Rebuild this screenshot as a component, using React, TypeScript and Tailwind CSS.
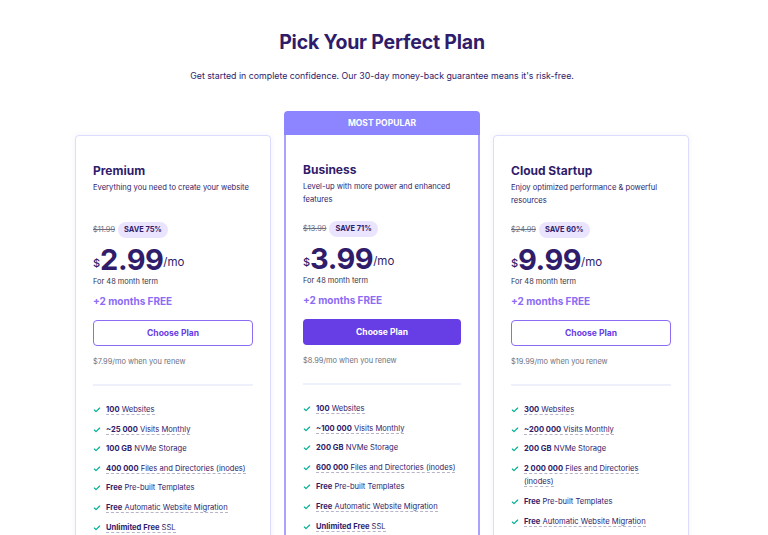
import React from 'react';
import { Check } from 'lucide-react';

type Feature = { bold: string; rest: string; dashed?: boolean };

type Plan = {
  name: string;
  desc: string;
  old: string;
  save: string;
  price: string;
  renew: string;
  popular?: boolean;
  features: Feature[];
};

const plans: Plan[] = [
  {
    name: 'Premium',
    desc: 'Everything you need to create your website',
    old: '$11.99',
    save: 'SAVE 75%',
    price: '2.99',
    renew: '$7.99/mo when you renew',
    features: [
      { bold: '100', rest: ' Websites', dashed: true },
      { bold: '~25 000', rest: ' Visits Monthly', dashed: true },
      { bold: '100 GB', rest: ' NVMe Storage' },
      { bold: '400 000', rest: ' Files and Directories (inodes)', dashed: true },
      { bold: 'Free', rest: ' Pre-built Templates' },
      { bold: 'Free', rest: ' Automatic Website Migration', dashed: true },
      { bold: 'Unlimited Free', rest: ' SSL', dashed: true },
    ],
  },
  {
    name: 'Business',
    desc: 'Level-up with more power and enhanced features',
    old: '$13.99',
    save: 'SAVE 71%',
    price: '3.99',
    renew: '$8.99/mo when you renew',
    popular: true,
    features: [
      { bold: '100', rest: ' Websites', dashed: true },
      { bold: '~100 000', rest: ' Visits Monthly', dashed: true },
      { bold: '200 GB', rest: ' NVMe Storage' },
      { bold: '600 000', rest: ' Files and Directories (inodes)', dashed: true },
      { bold: 'Free', rest: ' Pre-built Templates' },
      { bold: 'Free', rest: ' Automatic Website Migration', dashed: true },
      { bold: 'Unlimited Free', rest: ' SSL', dashed: true },
    ],
  },
  {
    name: 'Cloud Startup',
    desc: 'Enjoy optimized performance & powerful resources',
    old: '$24.99',
    save: 'SAVE 60%',
    price: '9.99',
    renew: '$19.99/mo when you renew',
    features: [
      { bold: '300', rest: ' Websites', dashed: true },
      { bold: '~200 000', rest: ' Visits Monthly', dashed: true },
      { bold: '200 GB', rest: ' NVMe Storage' },
      { bold: '2 000 000', rest: ' Files and Directories (inodes)', dashed: true },
      { bold: 'Free', rest: ' Pre-built Templates' },
      { bold: 'Free', rest: ' Automatic Website Migration', dashed: true },
      { bold: 'Unlimited Free', rest: ' SSL', dashed: true },
    ],
  },
];

const PlanCard: React.FC<{ plan: Plan }> = ({ plan }) => (
  <div className="flex w-[196px] flex-col">
    {plan.popular ? (
      <div className="flex h-[24px] items-center justify-center rounded-t-[4px] bg-[#8c85ff] text-[8.5px] font-bold text-white">
        MOST POPULAR
      </div>
    ) : (
      <div className="h-[24px]" />
    )}
    <div
      className={`flex h-[420px] flex-col bg-white px-[17px] pt-[27px] ${
        plan.popular
          ? 'border-x-2 border-[#a9a3ff]'
          : 'rounded-t-[4px] border border-[#dcdcfd] shadow-[0_0_6px_rgba(103,61,230,0.08)]'
      }`}
    >
      <h3 className="text-[12px] font-bold leading-[16px] text-[#2f1c6a]">{plan.name}</h3>
      <p className="mt-[2px] h-[26px] text-[7.6px] leading-[13px] text-[#2f1c6a]">{plan.desc}</p>

      <div className="mt-[15px] flex items-center gap-[3px]">
        <span className="text-[7.4px] text-[#6d7081] line-through">{plan.old}</span>
        <span className="flex h-[16px] items-center rounded-full bg-[#ebe4ff] px-[6px] text-[7.4px] font-bold text-[#2f1c6a]">
          {plan.save}
        </span>
      </div>

      <div className="mt-[8px] flex h-[28px] items-end text-[#2f1c6a]">
        <span className="mb-[3px] text-[11px] font-medium">$</span>
        <span className="text-[29px] font-bold leading-[28px] tracking-[-0.5px]">{plan.price}</span>
        <span className="mb-[3px] text-[11.5px]">/mo</span>
      </div>
      <p className="mt-[2px] text-[7.4px] leading-[12px] text-[#36344d]">For 48 month term</p>

      <p className="mt-[6px] text-[10px] font-bold leading-[14px] text-[#8c6bf5]">+2 months FREE</p>

      <button
        className={`mt-[12px] flex h-[26px] w-full items-center justify-center rounded-[4px] text-[8.5px] font-bold ${
          plan.popular
            ? 'bg-[#673de6] text-white'
            : 'border border-[#8c6bf5] bg-white text-[#673de6]'
        }`}
      >
        Choose Plan
      </button>

      <p className="mt-[10px] text-[7.4px] leading-[12px] text-[#6d7081]">{plan.renew}</p>

      <div className="mt-[16px] h-[2px] w-full bg-[#eef0fc]" />

      <ul className="mt-[17px] flex flex-col gap-[6px] pr-[4px]">
        {plan.features.map((f, i) => (
          <li key={i} className="flex items-start gap-[5px] text-[7.6px] leading-[13.6px] text-[#2f1c6a]">
            <Check className="mt-[3px] h-[8px] w-[8px] shrink-0 text-[#00b090]" strokeWidth={3.5} />
            <span>
              <span
                className={
                  f.dashed
                    ? 'border-b border-dashed border-[#b6b4c8] [box-decoration-break:clone]'
                    : ''
                }
              >
                <b className="font-bold">{f.bold}</b>
                {f.rest}
              </span>
            </span>
          </li>
        ))}
      </ul>
    </div>
  </div>
);

export default function App() {
  return (
    <div
      className="h-[535px] w-[768px] overflow-hidden bg-white pr-[4px]"
      style={{ fontFamily: 'Inter, "Noto Sans", sans-serif' }}
    >
      <div className="flex flex-col items-center">
        <h1 className="mt-[29px] text-[19.5px] font-bold leading-[26px] tracking-[-0.2px] text-[#2f1c6a]">
          Pick Your Perfect Plan
        </h1>
        <p className="mt-[14px] text-[8.8px] leading-[14px] text-[#2f1c6a]">
          Get started in complete confidence. Our 30-day money-back guarantee means it's risk-free.
        </p>
        <div className="mt-[28px] flex gap-[13px]">
          {plans.map((p) => (
            <PlanCard key={p.name} plan={p} />
          ))}
        </div>
      </div>
    </div>
  );
}
